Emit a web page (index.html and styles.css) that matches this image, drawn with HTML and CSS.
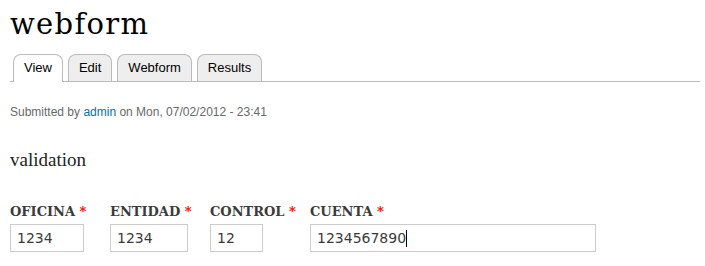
FILE: index.html
```html
<!DOCTYPE html>
<html lang="es">
<head>
    <meta charset="UTF-8">
    <title>webform</title>
    <link rel="stylesheet" href="styles.css">
</head>
<body>
    <h1 class="page-title">webform</h1>
    <ul class="tabs">
        <li class="tab active">View</li>
        <li class="tab">Edit</li>
        <li class="tab">Webform</li>
        <li class="tab">Results</li>
    </ul>

    <div class="submitted">Submitted by <a href="#">admin</a> on Mon, 07/02/2012 - 23:41</div>

    <h2 class="node-title">validation</h2>

    <form class="webform">
        <div class="form-item">
            <label>OFICINA <span class="required">*</span></label>
            <input type="text" class="w-oficina" value="1234">
        </div>
        <div class="form-item">
            <label>ENTIDAD <span class="required">*</span></label>
            <input type="text" class="w-entidad" value="1234">
        </div>
        <div class="form-item">
            <label>CONTROL <span class="required">*</span></label>
            <input type="text" class="w-control" value="12">
        </div>
        <div class="form-item">
            <label>CUENTA <span class="required">*</span></label>
            <div class="input-fake w-cuenta">1234567890<span class="caret"></span></div>
        </div>
    </form>
</body>
</html>
```

FILE: styles.css
```css
body {
    margin: 0;
    padding: 0 5px 0 10px;
    background: #fff;
    color: #3b3b3b;
    font-family: "Liberation Sans", Arial, sans-serif;
    font-size: 14px;
}
.page-title {
    font-family: "DejaVu Serif", Georgia, serif;
    font-weight: normal;
    font-size: 29px;
    letter-spacing: 1.3px;
    color: #000;
    margin: 0;
    padding-top: 6px;
    line-height: 36px;
}
.tabs {
    list-style: none;
    margin: 12px 0 0;
    padding: 0 0 0 3px;
    display: flex;
    gap: 5px;
    border-bottom: 1px solid #bbb;
}
.tab {
    background: #eee;
    border: 1px solid #bbb;
    border-bottom: none;
    border-radius: 8px 8px 0 0;
    padding: 5px 10px 0;
    height: 21px;
    font-size: 13px;
    color: #000;
}
.tab.active {
    background: #fff;
    margin-bottom: -1px;
    height: 22px;
}
.submitted {
    margin-top: 23px;
    font-size: 12px;
    color: #68696b;
}
.submitted a {
    color: #0071b3;
    text-decoration: none;
}
.node-title {
    font-family: "Liberation Serif", Georgia, serif;
    font-weight: normal;
    font-size: 19px;
    line-height: 22px;
    color: #222;
    margin: 30px 0 0;
}
.webform {
    display: flex;
    margin-top: 33px;
}
.form-item {
    width: 100px;
}
.form-item:last-child {
    width: auto;
}
.form-item label {
    display: block;
    font-family: "DejaVu Serif", Georgia, serif;
    font-weight: bold;
    font-size: 13px;
    color: #3b3b3b;
    margin-bottom: 5px;
}
.required {
    color: #f00;
}
.form-item input,
.input-fake {
    box-sizing: border-box;
    height: 28px;
    border: 1px solid #ccc;
    padding: 0 6px;
    font-family: "DejaVu Sans", Verdana, sans-serif;
    font-size: 14px;
    color: #3b3b3b;
    margin: 0;
}
.input-fake {
    display: flex;
    align-items: center;
}
.caret {
    display: inline-block;
    width: 1px;
    height: 17px;
    background: #000;
}
.w-oficina { width: 74px; }
.w-entidad { width: 78px; }
.w-control { width: 53px; }
.w-cuenta { width: 286px; }
```
